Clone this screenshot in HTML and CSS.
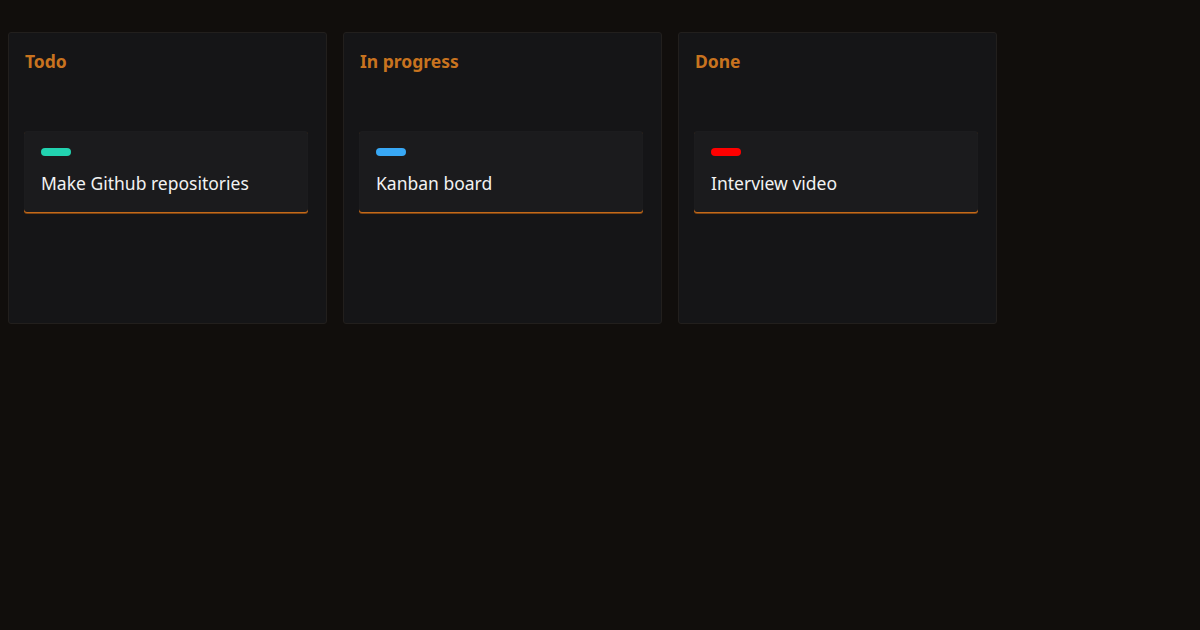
FILE: index.html
```html
<!DOCTYPE html>
<html>
<head>
    <title>Kanban</title>
    <meta name="viewport" content="width=device-width, initial-scale=1">
    <link rel="stylesheet" href="styles.css">
</head>
<body>
    <div class="board">
        <div class="column">
            <h2 class="column-title">Todo</h2>
            <div class="card">
                <span class="tag tag-green"></span>
                <p class="card-text">Make Github repositories</p>
            </div>
        </div>
        <div class="column">
            <h2 class="column-title">In progress</h2>
            <div class="card">
                <span class="tag tag-blue"></span>
                <p class="card-text">Kanban board</p>
            </div>
        </div>
        <div class="column">
            <h2 class="column-title">Done</h2>
            <div class="card">
                <span class="tag tag-red"></span>
                <p class="card-text">Interview video</p>
            </div>
        </div>
    </div>
</body>
</html>
```

FILE: styles.css
```css
body {
    margin: 0;
    padding: 32px 8px;
    background-color: #110e0c;
    font-family: "Noto Sans", "Open Sans", sans-serif;
    color: #f2f2f2;
}
.board {
    display: flex;
    gap: 16px;
    align-items: flex-start;
}
.column {
    box-sizing: border-box;
    width: 319px;
    height: 292px;
    padding: 15px;
    background-color: #151517;
    border: 1px solid #221f1d;
    border-radius: 3px;
}
.column-title {
    margin: 0 0 0 1px;
    padding-top: 1px;
    font-size: 17.5px;
    line-height: 24px;
    font-weight: bold;
    color: #c8731f;
}
.card {
    box-sizing: border-box;
    width: 284px;
    margin-top: 58px;
    padding: 16px 16px 16px;
    background-color: #1b1b1d;
    border: 1px solid #1c1c1e;
    border-radius: 3px;
    box-shadow: 0 1px 0 #c46a1a, 0 2px 0 #7a4212;
}
.tag {
    display: block;
    width: 30px;
    height: 8px;
    border-radius: 4px;
}
.tag-green {
    background-color: #22d3b0;
}
.tag-blue {
    background-color: #38a8f5;
}
.tag-red {
    background-color: #ff0000;
}
.card-text {
    margin: 15px 0 0;
    font-size: 17.5px;
    line-height: 24px;
}
```
